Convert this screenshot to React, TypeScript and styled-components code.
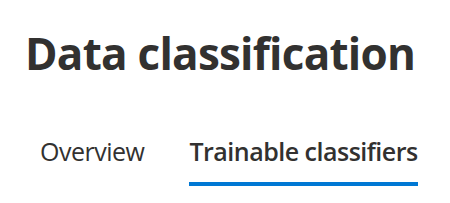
import React from 'react';
import styled, { createGlobalStyle } from 'styled-components';

const GlobalStyle = createGlobalStyle`
	html, body {
		margin: 0;
		padding: 0;
		background: #ffffff;
	}
	body {
		font-family: 'Open Sans', 'Noto Sans', sans-serif;
		color: #323130;
	}
`;

interface Tab {
	label: string;
	active?: boolean;
}

const tabs: Tab[] = [
	{ label: "Overview" },
	{ label: "Trainable classifiers", active: true },
];

const App: React.FC = () => (
	<>
		<GlobalStyle />
		<Page>
			<Title>Data classification</Title>
			<TabBar>
				{tabs.map((tab) => (
					<TabItem key={tab.label} $active={tab.active}>
						{tab.label}
					</TabItem>
				))}
			</TabBar>
		</Page>
	</>
);

const Page = styled.div`
	width: 450px;
	height: 203px;
	padding: 23px 0 0 25px;
	box-sizing: border-box;
	display: flex;
	flex-direction: column;
`;

const Title = styled.h1`
	margin: 0;
	font-size: 44px;
	font-weight: 700;
	letter-spacing: -0.75px;
	line-height: 60px;
	color: #323130;
	white-space: nowrap;
`;

const TabBar = styled.div`
	display: flex;
	gap: 45px;
	margin-top: 51px;
	padding-left: 15px;
`;

const TabItem = styled.div<{ $active?: boolean }>`
	font-size: 25px;
	line-height: 34px;
	letter-spacing: -0.5px;
	white-space: nowrap;
	font-weight: ${(p) => (p.$active ? 600 : 400)};
	color: #323130;
	padding-bottom: 14px;
	border-bottom: 4px solid ${(p) => (p.$active ? '#0078d4' : 'transparent')};
`;

export default App;
